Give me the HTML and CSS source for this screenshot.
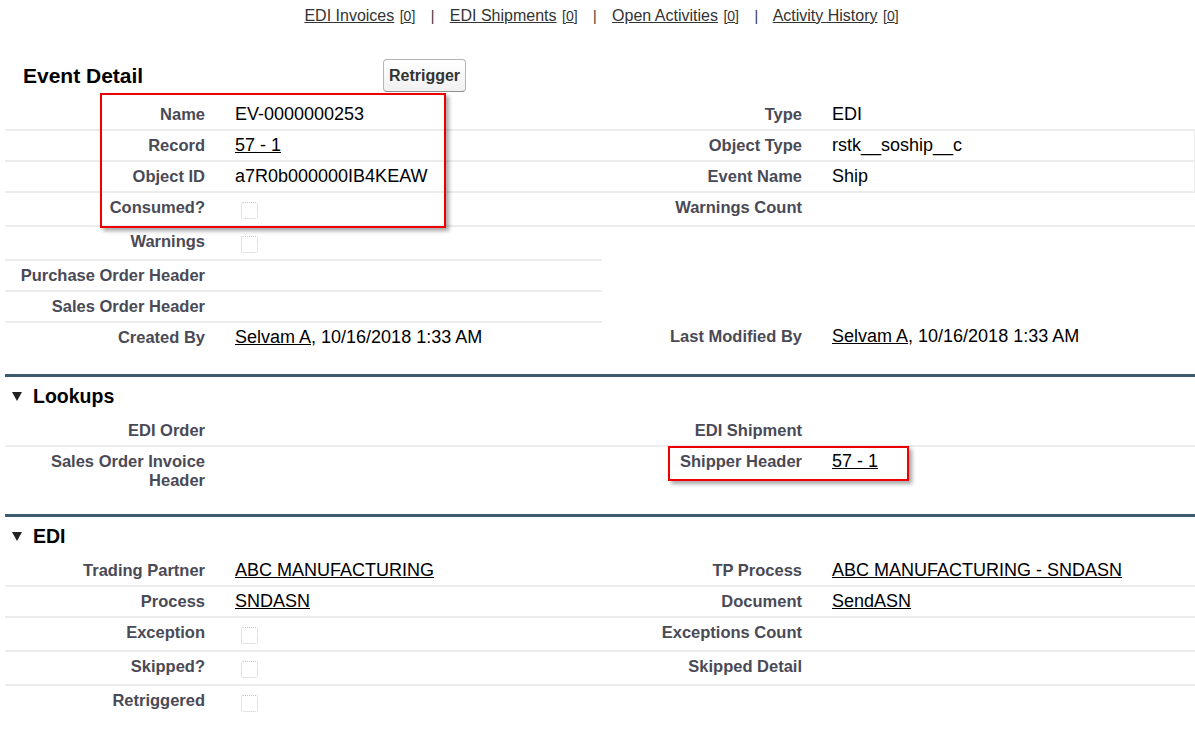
FILE: index.html
```html
<!DOCTYPE html>
<html lang="en">
<head>
  <meta charset="UTF-8" />
  <title>Event Detail</title>
  <link rel="stylesheet" href="styles.css">
</head>
<body>
<div class="page">
  <div class="linklets">
    <a href="#"><span class="ll-title">EDI Invoices</span> <span class="count">[<u>0</u>]</span></a>
    <span class="pipe">|</span>
    <a href="#"><span class="ll-title">EDI Shipments</span> <span class="count">[<u>0</u>]</span></a>
    <span class="pipe">|</span>
    <a href="#"><span class="ll-title">Open Activities</span> <span class="count">[<u>0</u>]</span></a>
    <span class="pipe">|</span>
    <a href="#"><span class="ll-title">Activity History</span> <span class="count">[<u>0</u>]</span></a>
  </div>

  <div class="page-block">
    <div class="pb-header">
      <h2 class="pb-title">Event Detail</h2>
      <button class="btn">Retrigger</button>
    </div>

    <table class="detail-list">
      <colgroup><col class="c-label"><col class="c-data-l"><col class="c-label"><col class="c-data-r"></colgroup>
      <tr>
        <td class="label">Name</td><td class="data">EV-0000000253</td>
        <td class="label">Type</td><td class="data">EDI</td>
      </tr>
      <tr>
        <td class="label">Record</td><td class="data"><a href="#">57 - 1</a></td>
        <td class="label">Object Type</td><td class="data edge">rstk__soship__c</td>
      </tr>
      <tr>
        <td class="label">Object ID</td><td class="data">a7R0b000000IB4KEAW</td>
        <td class="label">Event Name</td><td class="data edge">Ship</td>
      </tr>
      <tr>
        <td class="label">Consumed?</td><td class="data"><span class="check"></span></td>
        <td class="label">Warnings Count</td><td class="data"></td>
      </tr>
      <tr>
        <td class="label">Warnings</td><td class="data"><span class="check"></span></td>
        <td class="empty"></td><td class="empty"></td>
      </tr>
      <tr>
        <td class="label">Purchase Order Header</td><td class="data"></td>
        <td class="empty"></td><td class="empty"></td>
      </tr>
      <tr>
        <td class="label">Sales Order Header</td><td class="data"></td>
        <td class="empty"></td><td class="empty"></td>
      </tr>
      <tr class="last">
        <td class="label">Created By</td><td class="data"><a href="#">Selvam A</a>, 10/16/2018 1:33 AM</td>
        <td class="label">Last Modified By</td><td class="data"><a href="#">Selvam A</a>, 10/16/2018 1:33 AM</td>
      </tr>
    </table>

    <h3 class="sub-header"><span class="twist"></span>Lookups</h3>
    <table class="detail-list short">
      <colgroup><col class="c-label"><col class="c-data-l"><col class="c-label"><col class="c-data-r"></colgroup>
      <tr>
        <td class="label">EDI Order</td><td class="data"></td>
        <td class="label">EDI Shipment</td><td class="data"></td>
      </tr>
      <tr class="last">
        <td class="label">Sales Order Invoice Header</td><td class="data"></td>
        <td class="label">Shipper Header</td><td class="data"><a href="#">57 - 1</a></td>
      </tr>
    </table>

    <h3 class="sub-header"><span class="twist"></span>EDI</h3>
    <table class="detail-list">
      <colgroup><col class="c-label"><col class="c-data-l"><col class="c-label"><col class="c-data-r"></colgroup>
      <tr>
        <td class="label">Trading Partner</td><td class="data"><a href="#">ABC MANUFACTURING</a></td>
        <td class="label">TP Process</td><td class="data"><a href="#">ABC MANUFACTURING - SNDASN</a></td>
      </tr>
      <tr>
        <td class="label">Process</td><td class="data"><a href="#">SNDASN</a></td>
        <td class="label">Document</td><td class="data"><a href="#">SendASN</a></td>
      </tr>
      <tr>
        <td class="label">Exception</td><td class="data"><span class="check"></span></td>
        <td class="label">Exceptions Count</td><td class="data"></td>
      </tr>
      <tr>
        <td class="label">Skipped?</td><td class="data"><span class="check"></span></td>
        <td class="label">Skipped Detail</td><td class="data"></td>
      </tr>
      <tr class="last">
        <td class="label">Retriggered</td><td class="data"><span class="check"></span></td>
        <td class="empty"></td><td class="empty"></td>
      </tr>
    </table>
  </div>

  <!-- annotation boxes drawn over the page -->
  <div class="callout callout-main"></div>
  <div class="callout callout-shipper"></div>
</div>
</body>
</html>
```

FILE: styles.css
```css
body {
  margin: 0;
  font-family: "Liberation Sans", Arial, sans-serif;
  color: #000;
  background: #fff;
}
.page {
  position: relative;
  width: 1195px;
}
a {
  color: #000;
}

/* related list links on top */
.linklets {
  text-align: center;
  padding: 6px 0 0 8px;
  height: 26px;
  line-height: 20px;
  font-size: 16px;
  color: #333;
}
.linklets a {
  color: #333;
  text-decoration: none;
}
.linklets .ll-title {
  text-decoration: underline;
}
.linklets .count {
  font-size: 14px;
  margin-left: 1px;
}
.linklets .pipe {
  margin: 0 11px;
  font-size: 14px;
}

.page-block {
  margin-left: 5px;
  width: 1190px;
}
.pb-header {
  display: flex;
  align-items: center;
  margin-top: 27px;
  height: 33px;
  margin-bottom: 8px;
}
.pb-title {
  width: 360px;
  margin: 0;
  padding-left: 18px;
  font-size: 21px;
  font-weight: bold;
  color: #000;
}
.btn {
  width: 83px;
  height: 33px;
  padding: 0;
  font-family: inherit;
  font-size: 16px;
  font-weight: bold;
  color: #333;
  background: linear-gradient(#fff, #f1f1f1);
  border: 1px solid #b5b5b5;
  border-bottom-color: #8f8f8f;
  border-radius: 4px;
}

.detail-list {
  width: 1190px;
  table-layout: fixed;
  border-collapse: collapse;
  margin-bottom: 22px;
}
.detail-list.short {
  margin-bottom: 19px;
}
.c-label { width: 213px; }
.c-data-l { width: 384px; }
.c-data-r { width: 380px; }
.detail-list td {
  vertical-align: top;
  padding: 5px 0 5px;
  line-height: 19px;
  border-bottom: 2px solid #ececec;
}
.detail-list td.label {
  text-align: right;
  padding-right: 13px;
  font-size: 16.5px;
  font-weight: bold;
  color: #4a4a56;
}
.detail-list td.data {
  padding-left: 17px;
  font-size: 18px;
}
.detail-list td.edge {
  border-right: 2px solid #ececec;
}
.detail-list td.empty {
  border-bottom: none;
}
.detail-list tr.last td {
  border-bottom: none;
}
.check {
  display: block;
  width: 15px;
  height: 15px;
  margin: 4px 0 1px 6px;
  border: 1px dotted #c9c9c9;
  border-radius: 2px;
}

.sub-header {
  margin: 0;
  border-top: 3px solid #3d5b6f;
  padding: 8px 0 9px 7px;
  line-height: 22px;
  font-size: 19.5px;
  font-weight: bold;
  color: #000;
  display: flex;
  align-items: center;
}
.twist {
  width: 0;
  height: 0;
  margin-right: 11px;
  border-left: 5px solid transparent;
  border-right: 5px solid transparent;
  border-top: 9px solid #222;
}

.callout {
  position: absolute;
  border: 2px solid #ee0000;
  box-shadow: 3px 3px 4px rgba(0, 0, 0, 0.35);
}
.callout-main {
  left: 100px;
  top: 93px;
  width: 342px;
  height: 131px;
}
.callout-shipper {
  left: 668px;
  top: 446px;
  width: 237px;
  height: 31px;
}
```
